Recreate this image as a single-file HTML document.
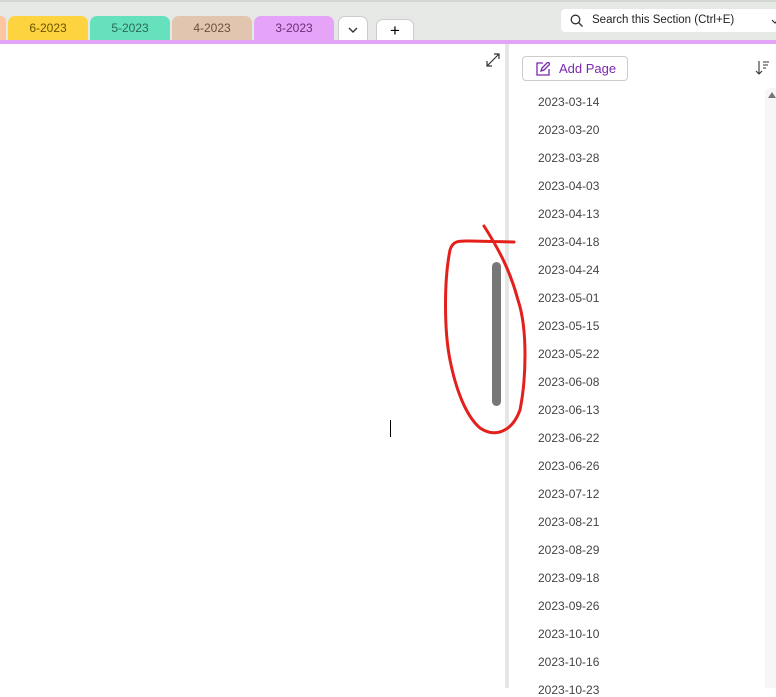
<!DOCTYPE html><html><head><style>
body{margin:0;width:776px;height:688px;overflow:hidden;background:#fff;font-family:"Liberation Sans",sans-serif;position:relative}
.top{position:absolute;left:0;top:0;width:776px;height:40px;background:#e6e8e6;border-top:2px solid #d4d6d4;box-sizing:border-box}
.line{position:absolute;left:0;top:40px;width:776px;height:4px;background:#e3a3f7}
.tab{position:absolute;top:16px;height:24px;border-radius:7px 7px 0 0;font-size:12px;text-align:center;line-height:24px}
.div{position:absolute;left:505px;top:44px;width:4px;height:644px;background:#e6e6e6}
.d{position:absolute;left:538px;font-size:12px;color:#444}
</style></head><body>
<div class="top"></div>
<div class="tab" style="left:-4px;width:10px;background:#fdc6a0"></div>
<div class="tab" style="left:8px;width:80px;background:#fdd33f;color:#6a5300">6-2023</div>
<div class="tab" style="left:90px;width:80px;background:#66e1bd;color:#2d6a57">5-2023</div>
<div class="tab" style="left:172px;width:80px;background:#e2c5ae;color:#6a5040">4-2023</div>
<div class="tab" style="left:254px;width:80px;background:#e6a4f8;color:#6a2e7a">3-2023</div>
<div class="tab" style="left:338px;width:30px;background:#fff;border:1px solid #ccc;border-bottom:none;box-sizing:border-box"><svg width="10" height="6" style="position:absolute;left:9px;top:10px"><path d="M1 1l4 4 4-4" fill="none" stroke="#333" stroke-width="1.4"/></svg></div>
<div class="tab" style="left:376px;width:38px;background:#fff;border:1px solid #ccc;border-bottom:none;box-sizing:border-box;top:19px;height:21px;line-height:21px;font-size:17px">+</div>
<div style="position:absolute;left:561px;top:9px;width:230px;height:23px;background:#fff;border-radius:4px;font-size:11.5px;line-height:23px;color:#222">
<svg width="14" height="14" style="position:absolute;left:9px;top:5px"><circle cx="5.5" cy="5.5" r="4.3" fill="none" stroke="#333" stroke-width="1.3"/><line x1="8.5" y1="8.5" x2="12.5" y2="12.5" stroke="#333" stroke-width="1.3"/></svg>
<span style="position:absolute;left:31px">Search this Section (Ctrl+E)</span><svg width="8" height="5" style="position:absolute;left:210px;top:10px"><path d="M1 1l3 3 3-3" fill="none" stroke="#333" stroke-width="1.2"/></svg></div>
<div class="line"></div>
<svg width="16" height="16" style="position:absolute;left:485px;top:52px"><path d="M2 14L14 2M9 2h5v5M2 9v5h5" fill="none" stroke="#333" stroke-width="1.2"/></svg>
<div style="position:absolute;top:420px;width:1px;height:17px;background:#000;left:390px"></div>
<div style="position:absolute;left:492px;top:262px;width:9px;height:144px;background:#777;border-radius:5px"></div>
<div class="div"></div>
<div style="position:absolute;left:522px;top:56px;width:104px;height:23px;border:1px solid #ccc;border-radius:4px;font-size:13px;color:#7a27b0;line-height:23px">
<svg width="14" height="14" style="position:absolute;left:13px;top:5px"><path d="M7 1H1v12h12V7M5 9l1-3 6-6 2 2-6 6z" fill="none" stroke="#7a27b0" stroke-width="1.3"/></svg>
<span style="position:absolute;left:36px">Add Page</span></div>
<svg width="16" height="16" style="position:absolute;left:755px;top:60px"><path d="M4 1v13M1 11l3 3 3-3M8 2h6M8 5h5M8 8h3" fill="none" stroke="#333" stroke-width="1.1"/></svg>
<div style="position:absolute;left:765px;top:88px;width:11px;height:600px;background:#f6f6f6;border-radius:5px 0 0 0"></div>
<div style="position:absolute;left:768px;top:92px;width:0;height:0;border-left:4px solid transparent;border-right:4px solid transparent;border-bottom:6px solid #777"></div>
<div class="d" style="top:95px">2023-03-14</div><div class="d" style="top:123px">2023-03-20</div><div class="d" style="top:151px">2023-03-28</div><div class="d" style="top:179px">2023-04-03</div><div class="d" style="top:207px">2023-04-13</div><div class="d" style="top:235px">2023-04-18</div><div class="d" style="top:263px">2023-04-24</div><div class="d" style="top:291px">2023-05-01</div><div class="d" style="top:319px">2023-05-15</div><div class="d" style="top:347px">2023-05-22</div><div class="d" style="top:375px">2023-06-08</div><div class="d" style="top:403px">2023-06-13</div><div class="d" style="top:431px">2023-06-22</div><div class="d" style="top:459px">2023-06-26</div><div class="d" style="top:487px">2023-07-12</div><div class="d" style="top:515px">2023-08-21</div><div class="d" style="top:543px">2023-08-29</div><div class="d" style="top:571px">2023-09-18</div><div class="d" style="top:599px">2023-09-26</div><div class="d" style="top:627px">2023-10-10</div><div class="d" style="top:655px">2023-10-16</div><div class="d" style="top:683px">2023-10-23</div>
<svg width="776" height="688" style="position:absolute;left:0;top:0;pointer-events:none"><path d="M484 226C498 248 510 270 518 300C528 330 526 380 520 410C512 432 495 438 480 428C466 416 456 390 450 360C444 330 444 280 450 250C453 240 460 241 470 241L514 242" fill="none" stroke="#e3201c" stroke-width="3" stroke-linecap="round"/></svg>
</body></html>
